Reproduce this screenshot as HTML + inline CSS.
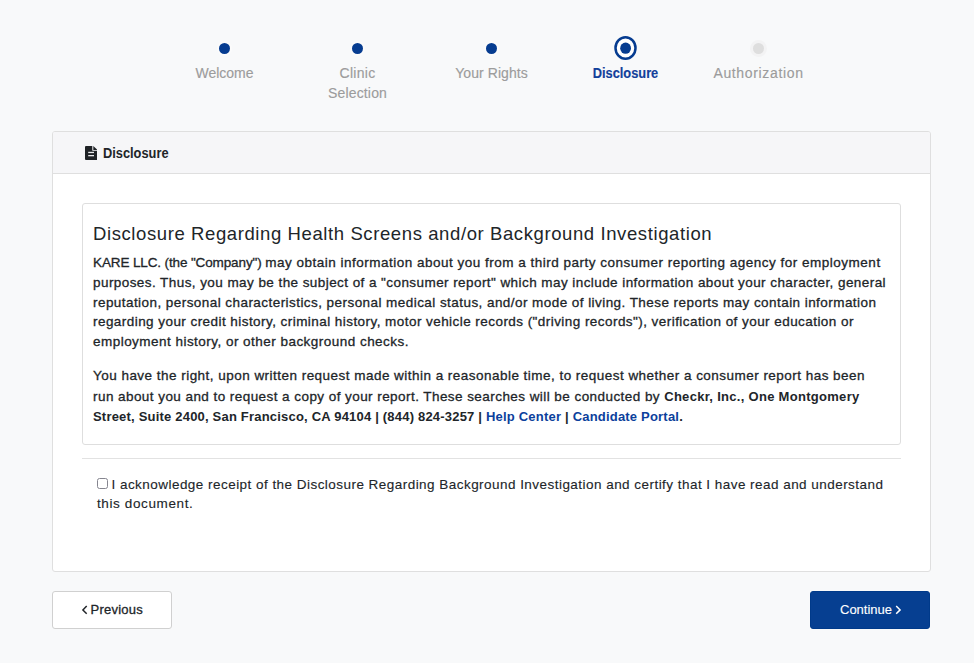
<!DOCTYPE html>
<html>
<head>
<meta charset="utf-8">
<title>Disclosure</title>
<style>
html,body{margin:0;padding:0;}
body{width:974px;height:663px;overflow:hidden;background:#f8f9fa;font-family:"Liberation Sans",sans-serif;color:#212529;position:relative;}
.abs{position:absolute;}
.step{position:absolute;top:0;width:133px;text-align:center;font-size:14px;line-height:20px;color:#9c9c9c;-webkit-text-stroke:.15px;}
.step .dot{position:absolute;left:50%;top:42.5px;width:11px;height:11px;margin-left:-5.5px;border-radius:50%;background:#063c90;box-shadow:0 0 0 2px #fbfbfb;}
.step .lbl{position:absolute;left:0;right:0;top:63px;white-space:nowrap;}
.card{position:absolute;left:52px;top:131px;width:877px;height:439px;background:#fff;border:1px solid #dfdfdf;border-radius:3px;}
.card-h{position:absolute;left:0;top:0;right:0;height:41px;background:#f6f6f8;border-bottom:1px solid #dfdfdf;border-radius:2px 2px 0 0;}
.box{position:absolute;left:82px;top:203px;width:817px;height:240px;border:1px solid #dedede;border-radius:3px;background:#fff;}
.ln{position:absolute;white-space:nowrap;-webkit-text-stroke:0.3px;font-size:13.5px;line-height:20px;height:20px;color:#212529;}
.b{font-weight:bold;font-size:13px;-webkit-text-stroke:0;}
a{color:#0c3f9c;text-decoration:none;font-weight:bold;}
.btn{position:absolute;top:591px;width:118px;height:36px;border-radius:3px;}
.bt{position:absolute;top:600px;height:20px;line-height:20px;font-size:13px;white-space:nowrap;letter-spacing:.15px;-webkit-text-stroke:.3px;}
#s1{letter-spacing:0}#s2{letter-spacing:.3px}#s2b{letter-spacing:.17px}#s3{letter-spacing:.06px}#s4{font-size:14px;transform:scaleX(.915);transform-origin:50% 50%}#s5{letter-spacing:.65px}
/*LS*/
#ttl{letter-spacing:0.600px;}
#l2{letter-spacing:0.430px;}
#l3{letter-spacing:0.441px;}
#l4{letter-spacing:0.444px;}
#l5{letter-spacing:0.470px;}
#p1{letter-spacing:0.471px;}
#p3{letter-spacing:0.200px;}
#c1{letter-spacing:0.462px;}
#c2{letter-spacing:0.615px;}
#p2a{letter-spacing:0.439px;}
#p2b{letter-spacing:0.293px;}
#l1a{letter-spacing:-0.124px;}
#l1b{letter-spacing:0.499px;}
/*ENDLS*/
</style>
</head>
<body>

<!-- stepper -->
<div class="step" style="left:158px"><span class="dot"></span><span class="lbl" id="s1">Welcome</span></div>
<div class="step" style="left:291px"><span class="dot"></span><span class="lbl" id="s2">Clinic</span><span class="lbl" id="s2b" style="top:83px">Selection</span></div>
<div class="step" style="left:425px"><span class="dot"></span><span class="lbl" id="s3">Your Rights</span></div>
<div class="step" style="left:559px;color:#12409a;font-weight:bold;">
  <svg class="abs" style="left:54px;top:35px" width="25" height="26" viewBox="0 0 25 26"><ellipse cx="12.5" cy="13" rx="10" ry="10.7" fill="#fff" stroke="#063c90" stroke-width="2.5"/><ellipse cx="12.6" cy="13.2" rx="5.4" ry="5.6" fill="#063c90"/></svg>
  <span class="lbl" id="s4">Disclosure</span></div>
<div class="step" style="left:692px"><span class="dot" style="background:#dedede;box-shadow:0 0 0 3px #f3f3f4"></span><span class="lbl" id="s5">Authorization</span></div>

<!-- card -->
<div class="card"><div class="card-h"></div></div>
<svg class="abs" style="left:84.5px;top:146px" width="12.5" height="14" viewBox="0 0 12.5 14"><path d="M1 0H7.3V4.8H12.5V13a1 1 0 0 1-1 1H1a1 1 0 0 1-1-1V1A1 1 0 0 1 1 0Z M8.3 0 L12.5 4.1H8.3Z" fill="#1f2226"/><rect x="3.2" y="5.8" width="5.8" height="1.3" fill="#e9e9ec"/><rect x="3.2" y="9" width="5.8" height="1.3" fill="#e9e9ec"/></svg>
<div class="ln b" id="hd" style="left:102.5px;top:142px;font-size:14px;line-height:22px;height:22px;transform:scaleX(.915);transform-origin:0 50%;">Disclosure</div>

<div class="box"></div>
<div class="ln" id="ttl" style="-webkit-text-stroke:0;left:93px;top:221px;font-size:18.5px;line-height:26px;height:26px;">Disclosure Regarding Health Screens and/or Background Investigation</div>

<div class="ln" id="l1" style="left:93px;top:253px;"><span id="l1a">KARE LLC. (the "Company") </span><span id="l1b">may obtain information about you from a third party consumer reporting agency for employment</span></div>
<div class="ln" id="l2" style="left:93px;top:273px;">purposes. Thus, you may be the subject of a "consumer report" which may include information about your character, general</div>
<div class="ln" id="l3" style="left:93px;top:293px;">reputation, personal characteristics, personal medical status, and/or mode of living. These reports may contain information</div>
<div class="ln" id="l4" style="left:93px;top:312px;">regarding your credit history, criminal history, motor vehicle records ("driving records"), verification of your education or</div>
<div class="ln" id="l5" style="left:93px;top:332px;">employment history, or other background checks.</div>

<div class="ln" id="p1" style="left:93px;top:366px;">You have the right, upon written request made within a reasonable time, to request whether a consumer report has been</div>
<div class="ln" id="p2" style="left:93px;top:387px;"><span id="p2a">run about you and to request a copy of your report. These searches will be conducted by </span><span class="b" id="p2b">Checkr, Inc., One Montgomery</span></div>
<div class="ln b" id="p3" style="left:93px;top:407px;">Street, Suite 2400, San Francisco, CA 94104 | (844) 824-3257 | <a>Help Center</a> | <a>Candidate Portal</a>.</div>

<div class="abs" style="left:82px;top:458px;width:819px;height:1px;background:#e2e2e2;"></div>

<div class="abs" style="left:97px;top:478px;width:9px;height:9px;border:1px solid #85858f;border-radius:2.5px;background:#fff;"></div>
<div class="ln" id="c1" style="-webkit-text-stroke:.12px;left:111.5px;top:475px;">I acknowledge receipt of the Disclosure Regarding Background Investigation and certify that I have read and understand</div>
<div class="ln" id="c2" style="-webkit-text-stroke:.12px;left:97px;top:494px;">this document.</div>

<!-- buttons -->
<div class="btn" style="left:52px;background:#fff;border:1px solid #d0d0d0;"></div>
<svg class="abs" style="left:81px;top:604px" width="8" height="12" viewBox="0 0 8 12"><polyline points="5.7,2 1.9,5.9 5.7,9.8" fill="none" stroke="#212529" stroke-width="1.5"/></svg>
<div class="bt" id="b1" style="left:90.5px;color:#212529;letter-spacing:.25px;">Previous</div>
<div class="btn" style="left:810px;background:#063f91;border:1px solid #003a8a;"></div>
<div class="bt" id="b2" style="left:840px;color:#fff;letter-spacing:0;-webkit-text-stroke:.12px;">Continue</div>
<svg class="abs" style="left:894px;top:604px" width="8" height="12" viewBox="0 0 8 12"><polyline points="2.2,2 6.1,5.9 2.2,9.8" fill="none" stroke="#fff" stroke-width="1.5"/></svg>

</body>
</html>
